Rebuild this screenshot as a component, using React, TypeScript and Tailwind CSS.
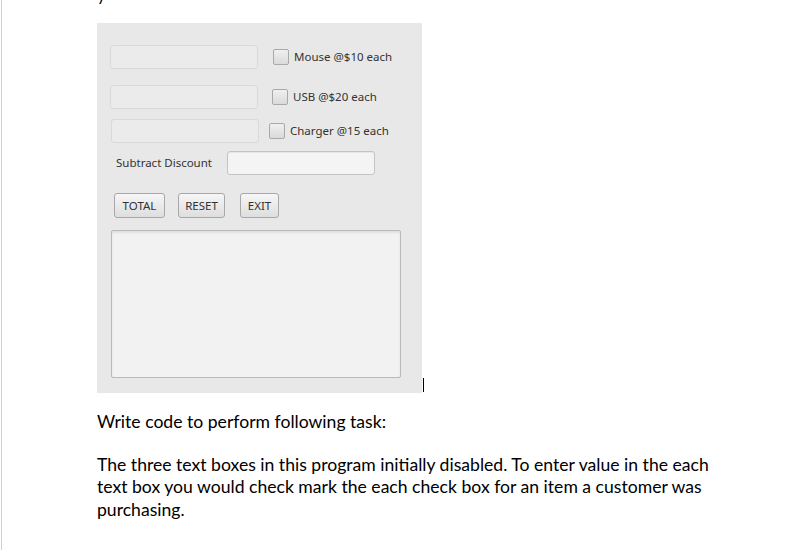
import React from 'react'

const ui = { fontFamily: '"Noto Sans", "Open Sans", sans-serif' }
const doc = { fontFamily: 'Lato, "Noto Sans", sans-serif' }

const Field = ({ className = '' }: { className?: string }) => (
  <div className={`h-[24px] w-[148px] rounded-[3px] border border-[#d9d9d9] bg-[#ebebeb] ${className}`} />
)

const Check = ({ label, className = '' }: { label: string; className?: string }) => (
  <div className={`flex items-center ${className}`}>
    <div className="h-[16px] w-[16px] rounded-[2px] border border-[#a9a9a9] bg-gradient-to-b from-[#f0f0f0] to-[#dadada]" />
    <span className="ml-[5px] text-[11.5px] text-[#333]">{label}</span>
  </div>
)

const Btn = ({ label, w }: { label: string; w: string }) => (
  <div className={`flex h-[25px] ${w} items-center justify-center rounded-[3px] border border-[#a8a8a8] bg-gradient-to-b from-[#f6f6f6] to-[#dedede] text-[11.5px] text-[#333]`}>
    {label}
  </div>
)

export default function App() {
  return (
    <div className="relative h-[550px] w-[805px] overflow-hidden bg-white">
      <div className="ml-[1px] h-full border-l border-[#cfcfcf] pl-[95px]">
        {/* tail of the line above, cut off by the page top */}
        <div className="h-[23px] overflow-hidden">
          <div className="-mt-[15px] text-[17px] leading-[20px] text-black" style={doc}>y</div>
        </div>

        <div className="flex items-end">
          <div className="h-[370px] w-[325px] bg-[#e8e8e8] pt-[22px]" style={ui}>
            <div className="ml-[13px] flex items-center">
              <Field />
              <Check label="Mouse @$10 each" className="ml-[15px]" />
            </div>
            <div className="ml-[13px] mt-[16px] flex items-center">
              <Field />
              <Check label="USB @$20 each" className="ml-[14px]" />
            </div>
            <div className="ml-[14px] mt-[10px] flex items-center">
              <Field />
              <Check label="Charger @15 each" className="ml-[10px]" />
            </div>
            <div className="ml-[19px] mt-[8px] flex items-center">
              <span className="w-[111px] text-[11.5px] text-[#333]">Subtract Discount</span>
              <div className="h-[24px] w-[148px] rounded-[3px] border border-[#c4c4c4] bg-[#f4f4f4] shadow-[inset_0_1px_1px_rgba(0,0,0,0.06)]" />
            </div>
            <div className="ml-[17px] mt-[18px] flex gap-[13px]">
              <Btn label="TOTAL" w="w-[51px]" />
              <Btn label="RESET" w="w-[47px]" />
              <div className="ml-[2px]">
                <Btn label="EXIT" w="w-[39px]" />
              </div>
            </div>
            <div className="ml-[14px] mt-[12px] h-[148px] w-[290px] rounded-[2px] border border-[#b9b9b9] bg-[#f2f2f2] shadow-[inset_0_2px_2px_rgba(0,0,0,0.08)]" />
          </div>
          <div className="mb-[1px] ml-[1px] h-[14px] w-px bg-black" />
        </div>

        <div className="mt-[18px] text-[17.6px] leading-[22.5px] text-black" style={doc}>
          <p className="whitespace-nowrap">Write code to perform following task:</p>
          <p className="mt-[20px] whitespace-nowrap">
            The three text boxes in this program initially disabled. To enter value in the each
            <br />
            text box you would check mark the each check box for an item a customer was
            <br />
            purchasing.
          </p>
        </div>
      </div>
    </div>
  )
}
